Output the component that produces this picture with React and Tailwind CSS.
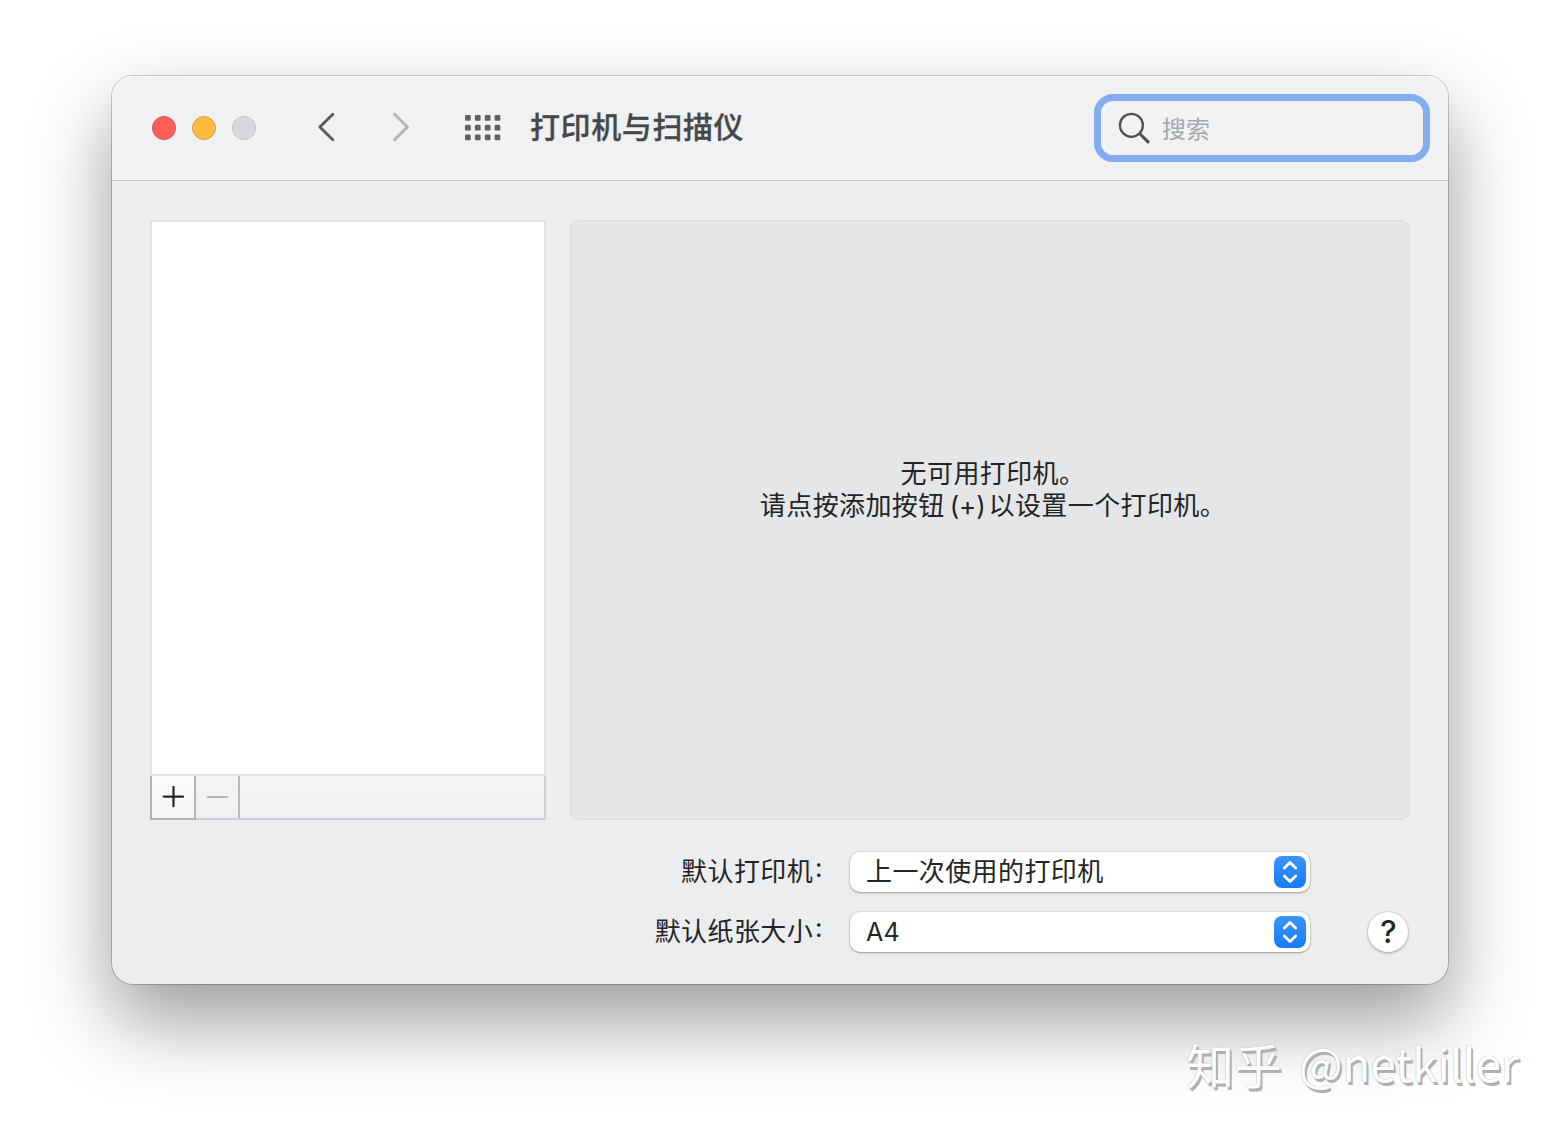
import React from "react";

const TrafficLights = () => (
  <div className="flex gap-4">
    <span className="size-6 rounded-full bg-[#fe5f57] border border-[#e6504a]"></span>
    <span className="size-6 rounded-full bg-[#febb3f] border border-[#e0a13c]"></span>
    <span className="size-6 rounded-full bg-[#d6d8db] border border-[#c2c3c5]"></span>
  </div>
);

const Chevron = ({ d, className }) => (
  <svg
    width="20"
    height="32"
    viewBox="0 0 20 32"
    fill="none"
    stroke="currentColor"
    strokeWidth="2.9"
    strokeLinecap="round"
    strokeLinejoin="round"
    className={className}
  >
    <path d={d} />
  </svg>
);

const GridIcon = () => (
  <svg width="36" height="26" viewBox="0 0 36 26" className="fill-[#606163]">
    {[0, 9.9, 19.8, 29.6].map((x) =>
      [0, 9.8, 19.5].map((y) => (
        <rect key={`${x}-${y}`} x={x} y={y} width="5.7" height="5.8" rx="1.2" />
      ))
    )}
  </svg>
);

const Toolbar = () => (
  <header className="flex items-center h-[105px] pl-10 pr-[18px] bg-[#f0f1f3] border-b border-[#c7c8ca] rounded-t-[21px] shadow-[inset_0_1px_0_#f8f9fa]">
    <TrafficLights />
    <Chevron d="M16.8 2.3 L3.9 15 L16.8 27.7" className="ml-[60px] text-[#5b5c5e]" />
    <Chevron d="M4.6 2.3 L17.4 15 L4.6 27.7" className="ml-[54px] text-[#b3b4b6]" />
    <div className="ml-[55px]">
      <GridIcon />
    </div>
    <h1 className="-mt-0.5 ml-[29px] text-[30px] leading-10 tracking-[0.6px] font-medium text-[#464749] [-webkit-text-stroke:0.3px_#464749]">
      打印机与扫描仪
    </h1>
    <div className="flex items-center ml-auto w-[336px] h-[68px] border-[7px] border-[#83adee] rounded-[19px] bg-[#f1f2f4]">
      <svg
        width="32"
        height="32"
        viewBox="0 0 32 32"
        fill="none"
        stroke="#505153"
        strokeLinecap="round"
        className="ml-[17px]"
      >
        <circle cx="13.4" cy="13.3" r="11.5" strokeWidth="2.3" />
        <path d="M21.8 21.7 L30 29.9" strokeWidth="3" />
      </svg>
      <span className="ml-3 mt-1 text-[24px] leading-8 text-[#a6a8aa]">搜索</span>
    </div>
  </header>
);

const PrinterList = () => (
  <div className="flex flex-col w-[396px] h-[600px]">
    <div className="flex-1 bg-white border-2 border-[#e1e2e3]"></div>
    <div className="flex h-11 border-r-2 border-b-2 border-[#cfd0d3] bg-linear-to-b from-[#f4f4f4] to-[#eff0f3]">
      <button className="flex items-center justify-center w-[46px] h-11 border-x-2 border-b-2 border-[#b1b3b6] bg-linear-to-b from-[#fcfcfc] to-[#f5f5f6]">
        <svg width="22" height="22" viewBox="0 0 22 22" stroke="#262728" strokeWidth="2.2" strokeLinecap="round">
          <path d="M1.7 10.6 H21 M11.5 1 V20.2" />
        </svg>
      </button>
      <button className="flex items-center justify-center w-11 h-[42px] border-r-2 border-[#b9bbbe]">
        <svg width="22" height="22" viewBox="0 0 22 22" stroke="#b5b6b8" strokeWidth="2" strokeLinecap="round">
          <path d="M1.8 11 H21" />
        </svg>
      </button>
    </div>
  </div>
);

const EmptyState = () => (
  <div className="flex flex-col items-center w-[840px] h-[600px] pt-[237px] pl-1.5 rounded-[10px] border border-[#dadbdd] bg-[#e5e6e8] text-[26px] leading-8 tracking-[0.4px]">
    <p>无可用打印机。</p>
    <p>
      请点按添加按钮
      <span className="ml-[5px] mr-[3px] tracking-[-0.1px]">(+)</span>
      以设置一个打印机。
    </p>
  </div>
);

const SelectRow = ({ label, value }) => (
  <div className="flex items-center justify-end h-10 text-[26px] leading-10 tracking-[0.4px]">
    <span className="mr-[27px]">
      {label}
      <span className="relative -top-1 ml-0.5">:</span>
    </span>
    <div className="flex items-center w-[460px] h-10 pl-4 pr-1 rounded-[10px] bg-white shadow-[0_0_1px_1px_rgba(0,0,0,0.07),0_1px_2px_rgba(0,0,0,0.3)]">
      <span>{value}</span>
      <span className="flex items-center justify-center size-8 ml-auto rounded-[8px] bg-linear-to-b from-[#3a94fb] to-[#147af9]">
        <svg
          width="16"
          height="24"
          viewBox="0 0 16 24"
          fill="none"
          stroke="white"
          strokeWidth="2.8"
          strokeLinecap="round"
          strokeLinejoin="round"
        >
          <path d="M2.3 8 L8 2.5 L13.7 8 M2.3 16 L8 21.5 L13.7 16" />
        </svg>
      </span>
    </div>
  </div>
);

const App = () => {
  return (
    <div className="relative w-[1560px] h-[1132px] pt-[76px] pl-28 overflow-hidden bg-white text-[#232425] font-['Inter','Noto_Sans_CJK_SC',sans-serif]">
      <div className="w-[1336px] h-[908px] rounded-[21px] bg-[#ecedef] shadow-[0_0_0_1px_rgba(0,0,0,0.2),0_36px_80px_rgba(0,0,0,0.4)]">
        <Toolbar />
        <main className="px-[38px] pt-[39px]">
          <div className="flex justify-between">
            <PrinterList />
            <EmptyState />
          </div>
          <div className="flex items-end justify-end pt-8">
            <div className="flex flex-col gap-5">
              <SelectRow label="默认打印机" value="上一次使用的打印机" />
              <SelectRow
                label="默认纸张大小"
                value={<span className="text-[25px] tracking-[0.2px]">A4</span>}
              />
            </div>
            <button className="flex items-center justify-center size-10 ml-[58px] mr-0.5 pl-px rounded-full bg-white text-[31px] font-medium shadow-[0_0_1px_1px_rgba(0,0,0,0.06),0_1px_3px_rgba(0,0,0,0.3)]">
              ?
            </button>
          </div>
        </main>
      </div>
      {/* watermark */}
      <div className="absolute left-[1186px] top-[1029px] flex text-[48px] leading-[68px] whitespace-nowrap text-white font-['Noto_Sans_CJK_SC',sans-serif] [text-shadow:0_0_1px_#999,2px_3px_0_#b0b0b0]">
        <span>知乎</span>
        <span className="ml-[17px] -mt-px text-[46px] tracking-[-0.2px]">@netkiller</span>
      </div>
    </div>
  );
};

export default App;
